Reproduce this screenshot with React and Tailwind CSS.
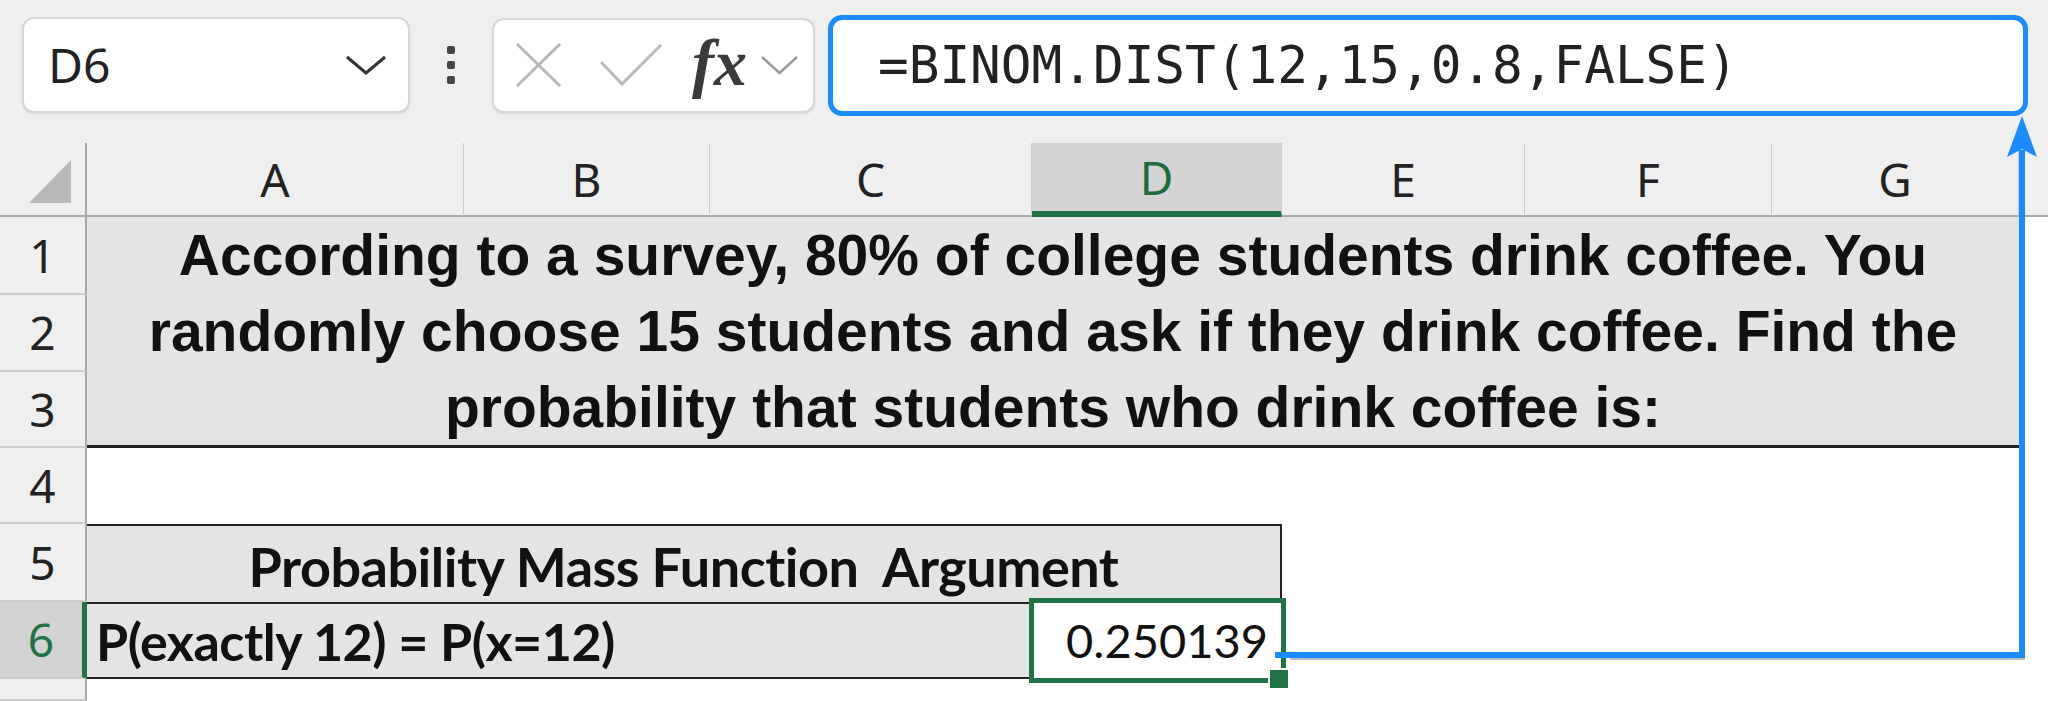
import React from "react";

const cols = [
  { key: "A", w: "w-[377px]" },
  { key: "B", w: "w-[246px]" },
  { key: "C", w: "w-[322px]" },
  { key: "D", w: "w-[250px]", active: true },
  { key: "E", w: "w-[243px]" },
  { key: "F", w: "w-[247px]" },
  { key: "G", w: "w-[247px]" },
];

const uiFont = { fontFamily: '"Noto Sans", "Open Sans", sans-serif' };
const cellFont = { fontFamily: 'Lato, "Open Sans", sans-serif' };

function RowHead({ n, h, active }) {
  return (
    <div
      className={`flex w-[87px] shrink-0 items-center justify-center border-b-2 border-[#cdcdcd] ${h} ${
        active
          ? "border-r-[5px] border-r-[#217346] bg-[#d2d2d2] text-[#217346]"
          : "border-r-2 border-r-[#a9a9a9] text-[#222]"
      } text-[46px]`}
      style={uiFont}
    >
      {n}
    </div>
  );
}

function Toolbar() {
  return (
    <div className="h-[143px]">
      <div className="flex h-[130px] items-center pl-[22px]">
        {/* name box */}
        <div className="flex h-[96px] w-[388px] items-center justify-between rounded-[12px] border-2 border-[#d8d8d8] bg-white pl-[24px] pr-[22px] shadow-[0_1px_2px_rgba(0,0,0,0.10)]">
          <span className="text-[48px] leading-none text-[#222]" style={uiFont}>
            D6
          </span>
          <svg width="40" height="20" viewBox="0 0 40 20">
            <polyline points="1,2 20,18 39,2" fill="none" stroke="#333" strokeWidth="3" />
          </svg>
        </div>

        {/* dots */}
        <div className="ml-[37px] flex flex-col gap-[7px]">
          <div className="h-[8px] w-[8px] rounded-[2px] bg-[#444]" />
          <div className="h-[8px] w-[8px] rounded-[2px] bg-[#444]" />
          <div className="h-[8px] w-[8px] rounded-[2px] bg-[#444]" />
        </div>

        {/* cancel / enter / fx */}
        <div className="ml-[37px] flex h-[95px] w-[323px] items-center rounded-[12px] border-2 border-[#d8d8d8] bg-white shadow-[0_1px_2px_rgba(0,0,0,0.10)]">
          <svg className="ml-[21px]" width="47" height="46" viewBox="0 0 47 46">
            <line x1="2" y1="2" x2="45" y2="44" stroke="#b8b8b8" strokeWidth="3" />
            <line x1="45" y1="2" x2="2" y2="44" stroke="#b8b8b8" strokeWidth="3" />
          </svg>
          <svg className="ml-[38px]" width="62" height="42" viewBox="0 0 62 42">
            <polyline points="1,18 22,40 61,1" fill="none" stroke="#b8b8b8" strokeWidth="3" />
          </svg>
          <span
            className="ml-[30px] mt-[-4px] text-[66px] font-bold italic leading-none text-[#3a3a3a]"
            style={{ fontFamily: '"Liberation Serif", serif' }}
          >
            fx
          </span>
          <svg className="ml-[14px]" width="37" height="20" viewBox="0 0 37 20">
            <polyline points="1,2 18.5,18 36,2" fill="none" stroke="#9a9a9a" strokeWidth="2.5" />
          </svg>
        </div>

        {/* formula bar */}
        <div className="ml-[13px] flex h-[101px] w-[1200px] items-center rounded-[14px] border-[5px] border-[#1a8cff] bg-white pl-[45px]">
          <span
            className="text-[51px] leading-none text-[#222]"
            style={{ fontFamily: '"DejaVu Sans Mono", "Liberation Mono", monospace' }}
          >
            =BINOM.DIST(12,15,0.8,FALSE)
          </span>
        </div>
      </div>
    </div>
  );
}

function HeaderRow() {
  return (
    <div className="flex h-[74px]">
      <div className="relative h-full w-[87px] shrink-0 border-r-2 border-b-2 border-[#a9a9a9]">
        <svg className="absolute left-[29px] top-[17px]" width="42" height="43" viewBox="0 0 42 43">
          <polygon points="42,0 42,43 0,43" fill="#b9b9b9" />
        </svg>
      </div>
      {cols.map((c) => (
        <div
          key={c.key}
          className={`flex h-full shrink-0 items-center justify-center border-r border-r-[#cdcdcd] text-[46px] ${c.w} ${
            c.active
              ? "border-b-[6px] border-b-[#217346] bg-[#d3d3d3] text-[#1d6b40]"
              : "border-b-2 border-b-[#a9a9a9] text-[#222]"
          }`}
          style={uiFont}
        >
          {c.key}
        </div>
      ))}
      <div className="h-full flex-1 border-b-2 border-[#a9a9a9]" />
    </div>
  );
}

export default function App() {
  return (
    <div className="relative h-[701px] w-[2048px] overflow-hidden bg-[#efefef]">
      <Toolbar />
      <HeaderRow />

      {/* rows 1-3, merged A1:G3 */}
      <div className="flex h-[231px]">
        <div className="flex flex-col">
          <RowHead n="1" h="h-[78px]" />
          <RowHead n="2" h="h-[77px]" />
          <RowHead n="3" h="h-[76px]" />
        </div>
        <div
          className="flex w-[1932px] flex-col items-center justify-center border-b-[3px] border-[#222] bg-[#e4e4e4] text-[57px] font-bold text-[#111]"
          style={{ fontFamily: '"Liberation Sans", Arial, sans-serif' }}
        >
          <div className="leading-[76px]">According to a survey, 80% of college students drink coffee. You</div>
          <div className="leading-[76px]">randomly choose 15 students and ask if they drink coffee. Find the</div>
          <div className="leading-[76px]">probability that students who drink coffee is:</div>
        </div>
        <div className="flex-1 bg-white" />
      </div>

      {/* row 4 */}
      <div className="flex h-[76px]">
        <RowHead n="4" h="h-full" />
        <div className="flex-1 bg-white" />
      </div>

      {/* row 5 */}
      <div className="flex h-[78px]">
        <RowHead n="5" h="h-full" />
        <div
          className="flex w-[1195px] items-center justify-center whitespace-pre border-t-2 border-r-2 border-[#222] bg-[#e4e4e4] pt-[4px] text-[54px] font-bold tracking-[-0.5px] text-[#111]"
          style={cellFont}
        >
          {"Probability Mass Function  Argument"}
        </div>
        <div className="flex-1 bg-white" />
      </div>

      {/* row 6 */}
      <div className="flex h-[77px]">
        <RowHead n="6" h="h-full" active />
        <div
          className="flex w-[945px] items-center border-y-2 border-[#222] bg-[#e4e4e4] pl-[9px] text-[52px] font-bold tracking-[-0.5px] text-[#111]"
          style={cellFont}
        >
          P(exactly 12) = P(x=12)
        </div>
        <div
          className="flex w-[250px] items-center justify-end bg-white pr-[14px] text-[47px] text-[#111]"
          style={cellFont}
        >
          0.250139
        </div>
        <div className="flex-1 bg-white" />
      </div>

      {/* row 7 */}
      <div className="flex h-[22px]">
        <RowHead n="" h="h-full" />
        <div className="flex-1 bg-white" />
      </div>

      {/* selection border + fill handle */}
      <div className="absolute left-[1029px] top-[598px] h-[85px] w-[257px] border-[5px] border-[#217346]" />
      <div className="absolute left-[1268px] top-[668px] h-[22px] w-[22px] border-2 border-white bg-[#217346]" />

      {/* trace arrow */}
      <svg className="pointer-events-none absolute left-0 top-0" width="2048" height="701" viewBox="0 0 2048 701">
        <line x1="1290" y1="659" x2="2025" y2="659" stroke="#555" strokeOpacity="0.5" strokeWidth="1.5" />
        <path d="M1275 655 H2022 V150" fill="none" stroke="#1a8cff" strokeWidth="6" strokeLinejoin="miter" />
        <polygon points="2022,116 2037,157 2022,149 2007,157" fill="#1a8cff" />
      </svg>
    </div>
  );
}
